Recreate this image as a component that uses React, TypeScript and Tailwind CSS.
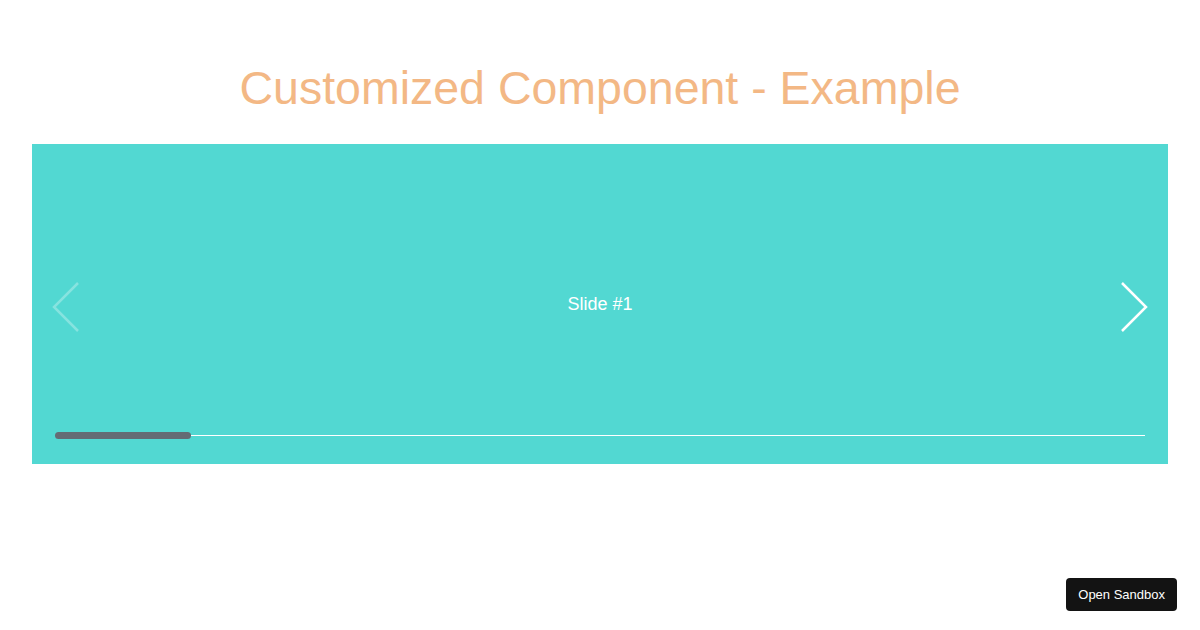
export default function App() {
  return (
    <div className="relative h-[630px] w-[1200px] bg-white font-['Liberation_Sans',Arial,sans-serif]">
      <h1 className="pt-[61px] text-center text-[46.5px] leading-[55px] text-[#f3b885]">
        Customized Component - Example
      </h1>
      <div className="mx-8 mt-[28px] flex h-[320px] flex-col bg-[#52d8d2]">
        <div className="grid flex-1 grid-cols-[28px_1fr_28px] items-center px-[20px] pt-[30px]">
          <svg width="28" height="50" viewBox="0 0 28 50" className="mt-[4px] opacity-30">
            <path d="M26 1 L2 25 L26 49" fill="none" stroke="white" strokeWidth="2.5" />
          </svg>
          <span className="text-center text-[18px] text-white">Slide #1</span>
          <svg width="28" height="50" viewBox="0 0 28 50" className="mt-[4px]">
            <path d="M2 1 L26 25 L2 49" fill="none" stroke="white" strokeWidth="2.5" />
          </svg>
        </div>
        <div className="relative mx-[23px] mb-[28px] h-px bg-white">
          <div className="absolute left-0 top-[-3px] h-[7px] w-[136px] rounded-full bg-[#646c74]" />
        </div>
      </div>
      <button className="absolute bottom-[19px] right-[23px] rounded-[4px] bg-[#131313] px-[12px] py-[8px] text-[13px] leading-[17px] text-white">
        Open Sandbox
      </button>
    </div>
  );
}
